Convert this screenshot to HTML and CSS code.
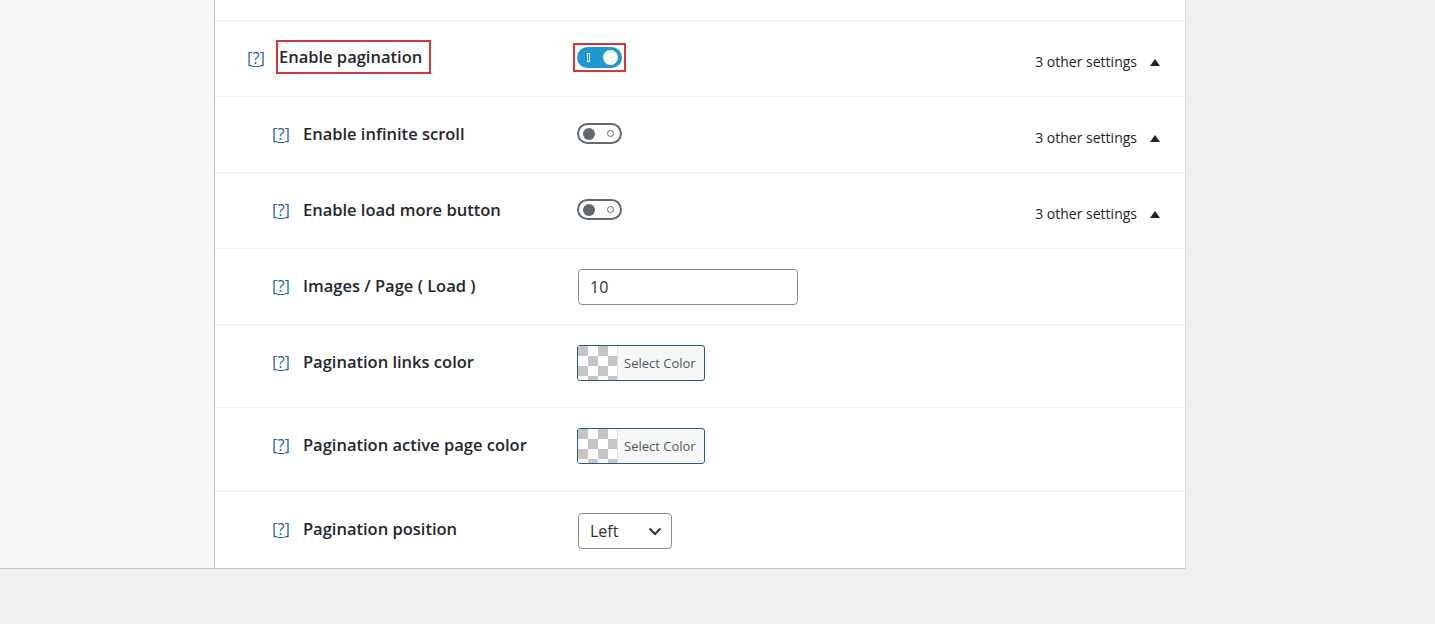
FILE: index.html
```html
<!DOCTYPE html>
<html>
<head>
<meta charset="utf-8">
<link rel="stylesheet" href="styles.css">
</head>
<body>
<div class="wrap">
  <div class="side"></div>
  <div class="main">
    <div class="top-space"></div>

    <div class="row">
      <div class="label-cell lvl1">
        <span class="help">[<a href="#">?</a>]</span>
        <span class="label boxed">Enable pagination</span>
      </div>
      <div class="control">
        <span class="toggle-box"><span class="toggle on"><span class="bar"></span><span class="knob"></span></span></span>
      </div>
      <div class="more">3 other settings <span class="tri"></span></div>
    </div>

    <div class="row">
      <div class="label-cell lvl2">
        <span class="help">[<a href="#">?</a>]</span>
        <span class="label">Enable infinite scroll</span>
      </div>
      <div class="control">
        <span class="toggle off"><span class="knob"></span><span class="ring"></span></span>
      </div>
      <div class="more">3 other settings <span class="tri"></span></div>
    </div>

    <div class="row">
      <div class="label-cell lvl2">
        <span class="help">[<a href="#">?</a>]</span>
        <span class="label">Enable load more button</span>
      </div>
      <div class="control">
        <span class="toggle off"><span class="knob"></span><span class="ring"></span></span>
      </div>
      <div class="more">3 other settings <span class="tri"></span></div>
    </div>

    <div class="row">
      <div class="label-cell lvl2">
        <span class="help">[<a href="#">?</a>]</span>
        <span class="label">Images / Page ( Load )</span>
      </div>
      <div class="control">
        <input class="text-input" type="text" value="10">
      </div>
      <div></div>
    </div>

    <div class="row tall">
      <div class="label-cell lvl2">
        <span class="help">[<a href="#">?</a>]</span>
        <span class="label">Pagination links color</span>
      </div>
      <div class="control">
        <button class="color-btn"><span class="swatch"></span><span class="color-text">Select Color</span></button>
      </div>
      <div></div>
    </div>

    <div class="row tall2">
      <div class="label-cell lvl2">
        <span class="help">[<a href="#">?</a>]</span>
        <span class="label">Pagination active page color</span>
      </div>
      <div class="control">
        <button class="color-btn"><span class="swatch"></span><span class="color-text">Select Color</span></button>
      </div>
      <div></div>
    </div>

    <div class="row last">
      <div class="label-cell lvl2">
        <span class="help">[<a href="#">?</a>]</span>
        <span class="label">Pagination position</span>
      </div>
      <div class="control">
        <div class="select"><span>Left</span>
          <svg class="chev" width="14" height="9" viewBox="0 0 14 9"><path d="M1.5 1.5 L7 7 L12.5 1.5" fill="none" stroke="#2c3338" stroke-width="2"/></svg>
        </div>
      </div>
      <div></div>
    </div>
  </div>
</div>
</body>
</html>
```
FILE: styles.css
```css
html, body {
  margin: 0;
  padding: 0;
}
body {
  background: #f0f0f1;
  font-family: "Open Sans", "Noto Sans", sans-serif;
  color: #1d2327;
  height: 624px;
  overflow: hidden;
}
.wrap {
  display: flex;
  box-sizing: border-box;
  width: 1186px;
  border-bottom: 1px solid #c3c4c7;
  border-right: 1px solid #dcdcde;
}
.side {
  width: 214px;
  background: #f8f8f8;
  border-right: 1px solid #c3c4c7;
  flex-shrink: 0;
}
.main {
  flex: 1;
  background: #fff;
}
.top-space {
  height: 20px;
}
.row {
  display: grid;
  grid-template-columns: 362px 1fr auto;
  align-items: start;
  border-top: 1px solid #f0f0f1;
  height: 75px;
}
.row.tall { height: 82px; }
.row.tall2 { height: 83px; }
.row.last { height: 76px; }
.label-cell {
  display: flex;
  align-items: center;
  margin-top: 19px;
  height: 36px;
}
.label-cell.lvl1 { padding-left: 32px; }
.label-cell.lvl2 { padding-left: 57px; }
.help {
  color: #1f69a6;
  font-size: 16.5px;
  font-weight: 400;
  line-height: 36px;
}
.help a {
  color: #1f69a6;
  text-decoration: underline;
  text-underline-offset: 2px;
  text-decoration-thickness: 1px;
}
.label {
  font-size: 16.5px;
  font-weight: 600;
  line-height: 36px;
  margin-left: 13px;
  white-space: nowrap;
  color: #23282d;
}
.label.boxed {
  border: 2px solid #d63638;
  line-height: 30px;
  padding: 0 7px 0 1px;
  margin-left: 11px;
  margin-top: -3px;
}
.control {
  margin-top: 19px;
}
.toggle-box {
  display: inline-block;
  border: 2px solid #d63638;
  padding: 2px;
  margin-left: -4px;
  margin-top: 3px;
  line-height: 0;
}
.toggle {
  display: inline-block;
  position: relative;
  width: 45px;
  height: 21px;
  border-radius: 11px;
  box-sizing: border-box;
}
.control > .toggle { margin-top: 7px; }
.toggle.on {
  background: #1c98d4;
}
.toggle.on .bar {
  position: absolute;
  left: 10px;
  top: 6px;
  width: 3px;
  height: 9px;
  border: 1px solid #fff;
  box-sizing: border-box;
}
.toggle.on .knob {
  position: absolute;
  right: 4px;
  top: 3px;
  width: 15px;
  height: 15px;
  border-radius: 50%;
  background: #fff;
}
.toggle.off {
  border: 2px solid #646970;
  background: #fff;
}
.toggle.off .knob {
  position: absolute;
  left: 4px;
  top: 2.5px;
  width: 12px;
  height: 12px;
  border-radius: 50%;
  background: #646970;
}
.toggle.off .ring {
  position: absolute;
  right: 6px;
  top: 5px;
  width: 7px;
  height: 7px;
  border-radius: 50%;
  border: 1.5px solid #646970;
  box-sizing: border-box;
}
.more {
  margin-top: 23px;
  font-size: 14px;
  line-height: 36px;
  color: #1d2327;
  padding-right: 25px;
  display: flex;
  align-items: center;
  white-space: nowrap;
}
.tri {
  display: inline-block;
  width: 0;
  height: 0;
  border-left: 5px solid transparent;
  border-right: 5px solid transparent;
  border-bottom: 7px solid #1d2327;
  margin-left: 13px;
}
.text-input {
  display: block;
  margin: 1px 0 0 1px;
  width: 220px;
  height: 36px;
  box-sizing: border-box;
  border: 1px solid #8c8f94;
  border-radius: 4px;
  padding: 0 11px;
  font-family: "Open Sans", "Noto Sans", sans-serif;
  font-size: 16px;
  color: #2c3338;
  background: #fff;
  outline: none;
}
.color-btn {
  display: flex;
  margin: 1px 0 0 0;
  width: 128px;
  height: 36px;
  padding: 0;
  box-sizing: border-box;
  border: 1px solid #2a5b84;
  border-radius: 3px;
  background: #f6f7f7;
  overflow: hidden;
  font-family: "Open Sans", "Noto Sans", sans-serif;
}
.swatch {
  width: 39px;
  height: 34px;
  flex-shrink: 0;
  background-color: #fff;
  background-image:
    linear-gradient(45deg, #c5c5c5 25%, transparent 25%, transparent 75%, #c5c5c5 75%),
    linear-gradient(45deg, #c5c5c5 25%, transparent 25%, transparent 75%, #c5c5c5 75%);
  background-size: 20px 20px;
  background-position: 10px 0, 0 10px;
  border-right: 1px solid #e0e0e0;
}
.color-text {
  font-size: 13px;
  line-height: 34px;
  color: #50575e;
  padding-left: 6px;
  white-space: nowrap;
}
.select {
  margin: 2px 0 0 1px;
  width: 94px;
  height: 36px;
  box-sizing: border-box;
  border: 1px solid #8c8f94;
  border-radius: 4px;
  display: flex;
  align-items: center;
  justify-content: space-between;
  padding: 0 9px 0 11px;
  font-size: 16px;
  color: #2c3338;
}
.chev {
  display: block;
}
```
